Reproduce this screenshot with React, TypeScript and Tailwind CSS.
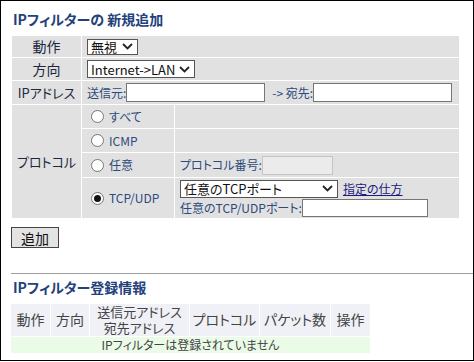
import React from "react";

const font = { fontFamily: '"Noto Sans CJK JP", "Noto Sans", sans-serif' };

function Chevron() {
  return (
    <svg width="11" height="7" viewBox="0 0 11 7" className="shrink-0">
      <polyline points="1,1 5.5,5.5 10,1" fill="none" stroke="#222" strokeWidth="1.8" />
    </svg>
  );
}

function FakeSelect({ label, className }: { label: string; className: string }) {
  return (
    <div className={`flex items-center justify-between border border-[#555] bg-white pl-[3px] pr-[4px] text-[#111] ${className}`}>
      <span className="leading-none whitespace-nowrap">{label}</span>
      <Chevron />
    </div>
  );
}

function Radio({ checked }: { checked?: boolean }) {
  return (
    <span className="flex h-[13px] w-[13px] shrink-0 items-center justify-center rounded-full border border-[#767676] bg-white">
      {checked && <span className="h-[7px] w-[7px] rounded-full bg-[#111]" />}
    </span>
  );
}

function RadioCell({ label, checked }: { label: string; checked?: boolean }) {
  return (
    <td className="bg-[#e1e1e1] p-0 align-middle">
      <div className="flex items-center gap-[5px] pl-[9px] text-[12px] text-[#2c4a7c]">
        <Radio checked={checked} />
        <span>{label}</span>
      </div>
    </td>
  );
}

export default function App() {
  return (
    <div
      style={font}
      className="w-[474px] h-[361px] border border-black bg-white [font-feature-settings:'palt'] overflow-hidden"
    >
      <div className="pl-[12px] mt-[8px] h-[20px] text-[14px] leading-[20px] font-bold text-[#23417b]">
        IPフィルターの 新規追加
      </div>

      {/* 新規追加フォーム */}
      <table className="mt-[6px] ml-[10px] border-separate border-spacing-[1px] table-fixed">
        <colgroup>
          <col className="w-[69px]" />
          <col className="w-[92px]" />
          <col className="w-[284px]" />
        </colgroup>
        <tbody>
          <tr>
            <td className="h-[21px] bg-[#e1e1e1] p-0 text-center text-[14px] text-[#1c2840]">動作</td>
            <td colSpan={2} className="bg-[#e1e1e1] p-0 pl-[5px]">
              <FakeSelect label="無視" className="w-[51px] h-[16px] text-[13px]" />
            </td>
          </tr>
          <tr>
            <td className="h-[22px] bg-[#e1e1e1] p-0 text-center text-[14px] text-[#1c2840]">方向</td>
            <td colSpan={2} className="bg-[#e1e1e1] p-0 pl-[5px]">
              <FakeSelect label="Internet->LAN" className="w-[108px] h-[18px] text-[13px]" />
            </td>
          </tr>
          <tr>
            <td className="h-[23px] bg-[#e1e1e1] p-0 text-center text-[13px] text-[#1c2840]">IPアドレス</td>
            <td colSpan={2} className="bg-[#e1e1e1] p-0 pl-[5px]">
              <div className="flex items-center text-[12px] text-[#2c4a7c]">
                <span>送信元:</span>
                <span className="h-[19px] w-[139px] border border-[#767676] bg-white" />
                <span className="ml-[7px]">-&gt; 宛先:</span>
                <span className="h-[19px] w-[139px] border border-[#767676] bg-white" />
              </div>
            </td>
          </tr>
          <tr>
            <td rowSpan={4} className="bg-[#e1e1e1] p-0 text-center text-[13px] text-[#1c2840]">プロトコル</td>
            <RadioCell label="すべて" />
            <td className="h-[23px] bg-[#e1e1e1] p-0" />
          </tr>
          <tr>
            <RadioCell label="ICMP" />
            <td className="h-[23px] bg-[#e1e1e1] p-0" />
          </tr>
          <tr>
            <RadioCell label="任意" />
            <td className="h-[24px] bg-[#e1e1e1] p-0 pl-[5px]">
              <div className="flex items-center text-[12px] text-[#2c4a7c]">
                <span>プロトコル番号:</span>
                <span className="h-[19px] w-[71px] border border-[#c4c4c4] bg-[#ebebeb]" />
              </div>
            </td>
          </tr>
          <tr>
            <RadioCell label="TCP/UDP" checked />
            <td className="h-[40px] bg-[#e1e1e1] p-0 pl-[5px]">
              <div className="flex items-center gap-[5px]">
                <FakeSelect label="任意のTCPポート" className="w-[158px] h-[18px] text-[13px]" />
                <a className="text-[12px] text-[#1a1a80] underline">指定の仕方</a>
              </div>
              <div className="mt-[1px] flex items-center text-[12px] text-[#2c4a7c]">
                <span>任意のTCP/UDPポート:</span>
                <span className="h-[18px] w-[126px] border border-[#767676] bg-white" />
              </div>
            </td>
          </tr>
        </tbody>
      </table>

      <button className="mt-[8px] ml-[10px] h-[21px] w-[48px] border border-[#444] bg-[#e3e3e3] text-[14px] text-[#111] leading-none">
        追加
      </button>

      <div className="mt-[24px] ml-[10px] h-px bg-[#a0a0a0]" />

      <div className="mt-[3px] pl-[12px] h-[20px] text-[14px] leading-[20px] font-bold text-[#23417b]">
        IPフィルター登録情報
      </div>

      {/* 登録情報 */}
      <table className="mt-[6px] ml-[9px] border-separate border-spacing-[1px] table-fixed text-[14px] text-[#444]">
        <colgroup>
          <col className="w-[39px]" />
          <col className="w-[38px]" />
          <col className="w-[99px]" />
          <col className="w-[69px]" />
          <col className="w-[70px]" />
          <col className="w-[39px]" />
        </colgroup>
        <thead>
          <tr className="bg-[#eff1f7]">
            <th className="h-[32px] p-0 font-normal">動作</th>
            <th className="p-0 font-normal">方向</th>
            <th className="p-0 font-normal text-[13px] leading-[16px]">
              <div>送信元アドレス</div>
              <div>宛先アドレス</div>
            </th>
            <th className="p-0 font-normal">プロトコル</th>
            <th className="p-0 font-normal">パケット数</th>
            <th className="p-0 font-normal">操作</th>
          </tr>
        </thead>
        <tbody>
          <tr>
            <td colSpan={6} className="h-[16px] bg-[#eafbe7] p-0 text-center text-[12px] leading-[16px]">
              IPフィルターは登録されていません
            </td>
          </tr>
        </tbody>
      </table>
    </div>
  );
}
